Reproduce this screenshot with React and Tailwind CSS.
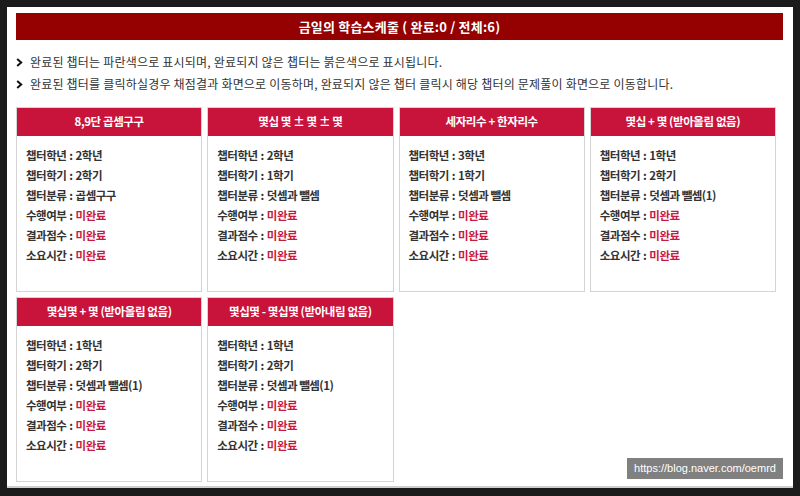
import { Fragment } from "react";

const chapters = [
  { title: "8,9단 곱셈구구", grade: "2학년", term: "2학기", kind: "곱셈구구" },
  { title: "몇십 몇 ± 몇 ± 몇", grade: "2학년", term: "1학기", kind: "덧셈과 뺄셈" },
  { title: "세자리수 + 한자리수", grade: "3학년", term: "1학기", kind: "덧셈과 뺄셈" },
  { title: "몇십 + 몇 (받아올림 없음)", grade: "1학년", term: "2학기", kind: "덧셈과 뺄셈(1)" },
  { title: "몇십몇 + 몇 (받아올림 없음)", grade: "1학년", term: "2학기", kind: "덧셈과 뺄셈(1)" },
  { title: "몇십몇 - 몇십몇 (받아내림 없음)", grade: "1학년", term: "2학기", kind: "덧셈과 뺄셈(1)" },
];

const font = { fontFamily: '"Noto Sans CJK KR", "Noto Sans", sans-serif' };

function Chevron() {
  return (
    <svg width="7" height="9" viewBox="0 0 7 9" className="shrink-0">
      <path d="M1.2 1 L5.2 4.5 L1.2 8" fill="none" stroke="#111" strokeWidth="2" />
    </svg>
  );
}

function ChapterCard({ chapter }) {
  const rows = [
    ["챕터학년", chapter.grade, false],
    ["챕터학기", chapter.term, false],
    ["챕터분류", chapter.kind, false],
    ["수행여부", "미완료", true],
    ["결과점수", "미완료", true],
    ["소요시간", "미완료", true],
  ];
  return (
    <div className="border border-[#d4d4d4] bg-white">
      <div className="h-[28px] bg-[#c8133b] flex items-center justify-center text-white text-[11.5px] font-bold tracking-[-0.4px]">
        {chapter.title}
      </div>
      <div className="h-[155px] pt-[9px] px-[9px]">
        {rows.map(([label, value, red]) => (
          <div key={label} className="h-[20px] leading-[20px] text-[11.5px] font-semibold tracking-[-0.5px] text-[#333] whitespace-pre">
            {label}
            <span className="mx-[3px]">:</span>
            <span className={red ? "text-[#c8193f]" : ""}>{value}</span>
          </div>
        ))}
      </div>
    </div>
  );
}

export default function App() {
  return (
    <div className="w-[800px] h-[496px] bg-[#1b1b1b] p-[7px]" style={font}>
      <div className="relative h-[481px] bg-white border-b-2 border-[#cfcfcf] pt-[6px] pl-[9px] pr-[10px]">
        <div className="h-[27px] bg-[#950000] flex items-center justify-center text-white text-[13px] font-bold tracking-[0.2px]">
          금일의 학습스케줄 ( 완료:0 / 전체:6)
        </div>

        <div className="mt-[11px] text-[12px] text-[#333] tracking-[0.2px]">
          {[
            "완료된 챕터는 파란색으로 표시되며, 완료되지 않은 챕터는 붉은색으로 표시됩니다.",
            "완료된 챕터를 클릭하실경우 채점결과 화면으로 이동하며, 완료되지 않은 챕터 클릭시 해당 챕터의 문제풀이 화면으로 이동합니다.",
          ].map((t) => (
            <div key={t} className="h-[22px] flex items-center gap-[7px]">
              <Chevron />
              <span>{t}</span>
            </div>
          ))}
        </div>

        <div className="mt-[12px] grid grid-cols-4 gap-[5px] w-[760px]">
          {chapters.map((c) => (
            <Fragment key={c.title}>
              <ChapterCard chapter={c} />
            </Fragment>
          ))}
        </div>

        <div className="absolute right-[10px] bottom-[7px] h-[21px] w-[156px] bg-[#808080] flex items-center justify-center text-white text-[11px] whitespace-nowrap" style={{ fontFamily: '"Liberation Sans", Arial, sans-serif' }}>
          https://blog.naver.com/oemrd
        </div>
      </div>
    </div>
  );
}
